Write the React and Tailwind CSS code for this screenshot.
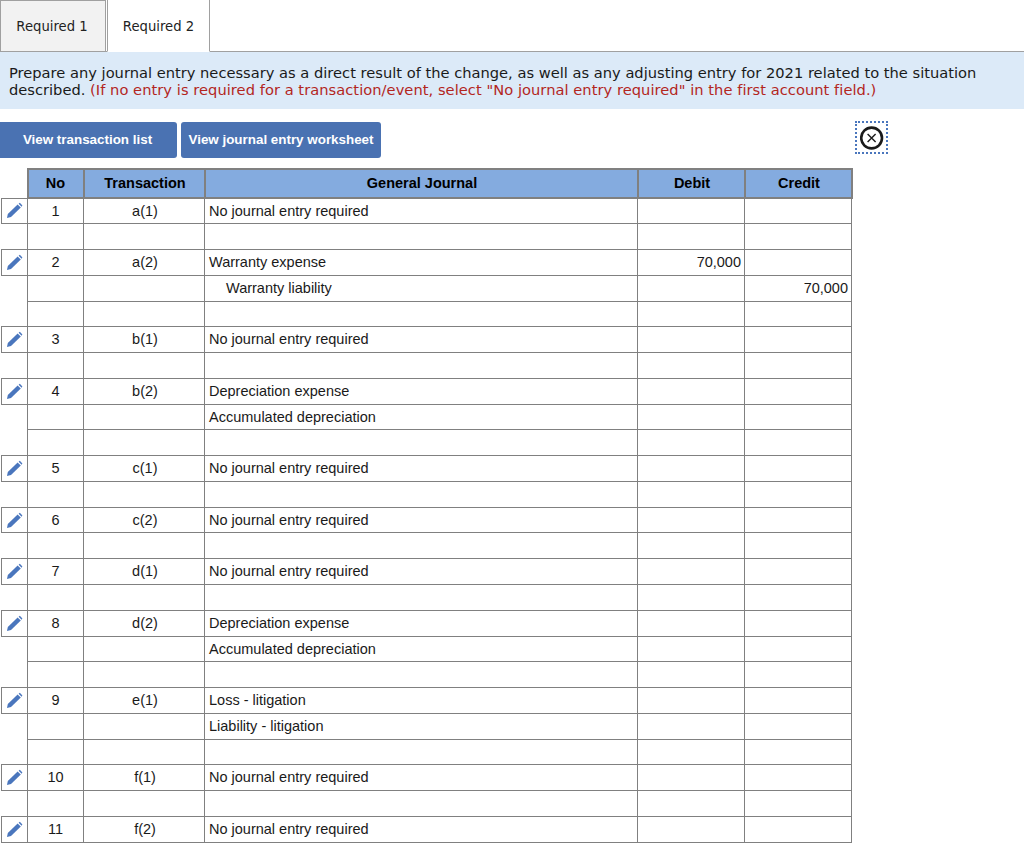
const rows = [
  { no: 1, tr: 'a(1)', lines: [{ text: 'No journal entry required' }] },
  { no: 2, tr: 'a(2)', lines: [{ text: 'Warranty expense', debit: '70,000' }, { text: 'Warranty liability', credit: '70,000', indent: true }], full: true },
  { no: 3, tr: 'b(1)', lines: [{ text: 'No journal entry required' }] },
  { no: 4, tr: 'b(2)', lines: [{ text: 'Depreciation expense' }, { text: 'Accumulated depreciation' }], full: true },
  { no: 5, tr: 'c(1)', lines: [{ text: 'No journal entry required' }] },
  { no: 6, tr: 'c(2)', lines: [{ text: 'No journal entry required' }] },
  { no: 7, tr: 'd(1)', lines: [{ text: 'No journal entry required' }] },
  { no: 8, tr: 'd(2)', lines: [{ text: 'Depreciation expense' }, { text: 'Accumulated depreciation' }], full: true },
  { no: 9, tr: 'e(1)', lines: [{ text: 'Loss - litigation' }, { text: 'Liability - litigation' }], full: true },
  { no: 10, tr: 'f(1)', lines: [{ text: 'No journal entry required' }] },
  { no: 11, tr: 'f(2)', lines: [{ text: 'No journal entry required' }], last: true },
];

function PencilIcon() {
  return (
    <svg width="17" height="17" viewBox="0 0 17 17" className="mx-auto">
      <path d="M1 16 L1.8 12 L11.6 2.6 L14.8 5.6 L5 15 Z" fill="#4a76bd" />
      <path d="M12.6 1.7 L13.8 0.8 L16.4 3.4 L15.6 4.7 Z" fill="#4a76bd" />
    </svg>
  );
}

function EntryRow({ row }) {
  const trs = [...row.lines];
  if (!row.last) trs.push({ text: '' });
  return trs.map((line, i) => (
    <tr key={i} className="h-[25.78px]">
      {i === 0 ? (
        <td className="border border-[#808080] p-0 align-middle">
          <PencilIcon />
        </td>
      ) : (
        <td className="p-0" />
      )}
      <td className="border border-[#808080] p-0 text-center">{i === 0 ? row.no : ''}</td>
      <td className="border border-[#808080] py-0 pl-[2px] pr-0 text-center">{i === 0 ? row.tr : ''}</td>
      <td className={`border border-[#808080] py-0 pr-1 ${line.indent ? 'pl-[21px]' : 'pl-[4px]'}`}>{line.text}</td>
      <td className="border border-[#808080] py-0 pl-1 pr-[3px] text-right">{line.debit}</td>
      <td className="border border-[#808080] py-0 pl-1 pr-[3px] text-right">{line.credit}</td>
    </tr>
  ));
}

export default function App() {
  return (
    <div className="w-[1024px] h-[850px] overflow-hidden bg-white text-black font-['Liberation_Sans',Arial,sans-serif]">
      <div className="flex h-[52px] border-b border-[#a0a0a0] font-['DejaVu_Sans',Verdana,sans-serif] text-[13.2px]">
        <div className="flex w-[106px] h-[52px] items-center justify-center border border-[#a0a0a0] bg-[#f2f2f2] pr-[2px] pt-[2px] text-[#222]">Required 1</div>
        <div className="ml-px flex w-[103px] h-[52px] items-center justify-center border-x border-[#a0a0a0] bg-white pt-[2px] text-[#222] border-b border-b-white">Required 2</div>
      </div>

      <div className="h-[57px] bg-[#dceaf8] pl-[9px] pt-[12px] font-['DejaVu_Sans',Verdana,sans-serif] text-[14.66px] leading-[17px] text-[#1a1a1a]">
        <div>Prepare any journal entry necessary as a direct result of the change, as well as any adjusting entry for 2021 related to the situation</div>
        <div>described. <span className="text-[#b3261e] tracking-[0.04px]">(If no entry is required for a transaction/event, select "No journal entry required" in the first account field.)</span></div>
      </div>

      <div className="mt-[13px] flex items-start">
        <button className="h-[36px] w-[177px] rounded-r-[3px] bg-[#4a72b2] pr-[2px] text-center text-[13.4px] font-bold text-white">View transaction list</button>
        <button className="ml-1 h-[36px] w-[200px] rounded-[3px] bg-[#4a72b2] text-center text-[13.4px] font-bold text-white">View journal entry worksheet</button>
        <div className="ml-[474px] -mt-[1px] flex h-[33px] w-[33px] items-center justify-center border-2 border-dotted border-[#4a76bd]">
          <svg width="24" height="24" viewBox="0 0 24 24" fill="none" stroke="#1a1a1a">
            <circle cx="11.6" cy="12" r="10.4" strokeWidth="2.6" />
            <path d="M7.6 8 L15.6 16 M15.6 8 L7.6 16" strokeWidth="1.4" />
          </svg>
        </div>
      </div>

      <table className="mt-[10px] ml-[1px] w-[850px] table-fixed border-collapse text-[14.5px] leading-none text-[#1a1a1a]">
        <colgroup>
          <col className="w-[26px]" />
          <col className="w-[56px]" />
          <col className="w-[121px]" />
          <col className="w-[433px]" />
          <col className="w-[107px]" />
          <col className="w-[107px]" />
        </colgroup>
        <thead>
          <tr className="h-[29px] font-bold text-black">
            <th className="p-0" />
            <th className="border-2 border-[#808080] bg-[#84abdf] p-0">No</th>
            <th className="border-2 border-[#808080] bg-[#84abdf] py-0 pl-[2px] pr-0">Transaction</th>
            <th className="border-2 border-[#808080] bg-[#84abdf] py-0 pl-[2px] pr-0">General Journal</th>
            <th className="border-2 border-[#808080] bg-[#84abdf] py-0 pl-[2px] pr-0">Debit</th>
            <th className="border-2 border-[#808080] bg-[#84abdf] py-0 pl-[2px] pr-0">Credit</th>
          </tr>
        </thead>
        <tbody>
          {rows.map((row) => (
            <EntryRow key={row.no} row={row} />
          ))}
        </tbody>
      </table>
    </div>
  );
}
